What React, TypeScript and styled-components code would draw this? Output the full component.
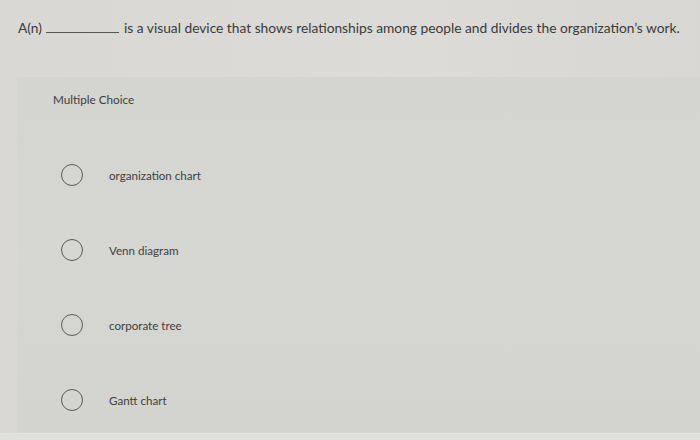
import React from 'react';
import styled, { createGlobalStyle } from 'styled-components';

const GlobalStyle = createGlobalStyle`
    html, body {
        margin: 0;
        padding: 0;
        background: #dad9d5;
    }
    body {
        font-family: 'Lato', 'Liberation Sans', sans-serif;
        color: #333333;
    }
`;

const options = ['organization chart', 'Venn diagram', 'corporate tree', 'Gantt chart'];

const App: React.FC = () => {
    return (
        <>
            <GlobalStyle />
            <Page>
                <Question>
                    A(n) <Blank /> is a visual device that shows relationships among people and divides the organization’s work.
                </Question>
                <Panel>
                    <Label>Multiple Choice</Label>
                    <OptionList>
                        {options.map((text) => (
                            <OptionRow key={text}>
                                <Radio />
                                <OptionText>{text}</OptionText>
                            </OptionRow>
                        ))}
                    </OptionList>
                </Panel>
                <Footer />
            </Page>
        </>
    );
};

export default App;

const Page = styled.div`
    width: 700px;
    height: 440px;
    display: flex;
    flex-direction: column;
    overflow: hidden;
    background: linear-gradient(90deg, #d9d8d4 0%, #dcdbd7 60%, #d8d7d4 100%);
`;

const Question = styled.div`
    padding: 19px 0 0 18px;
    height: 58px;
    box-sizing: border-box;
    font-size: 13.75px;
    color: #3a3a3a;
    white-space: nowrap;
`;

const Blank = styled.span`
    display: inline-block;
    width: 73px;
    height: 1px;
    margin: 0 2px 0 0;
    border-bottom: 1px solid #555555;
    vertical-align: baseline;
`;

const Panel = styled.div`
    margin-left: 17px;
    margin-top: 19px;
    height: 356px;
    padding: 15px 0 0 36px;
    box-sizing: border-box;
    background: linear-gradient(180deg, #d4d4d0 0%, #d6d6d2 50%, #d3d4d0 100%);
`;

const Label = styled.div`
    font-size: 11.7px;
    color: #3c3c3c;
    height: 20px;
`;

const OptionList = styled.div`
    display: flex;
    flex-direction: column;
    padding-top: 52px;
    gap: 53px;
`;

const OptionRow = styled.div`
    display: flex;
    align-items: center;
    height: 22px;
`;

const Radio = styled.span`
    width: 20px;
    height: 20px;
    border: 1.5px solid #5a5a5a;
    border-radius: 50%;
    margin-left: 8px;
    flex-shrink: 0;
`;

const OptionText = styled.span`
    margin-left: 26px;
    font-size: 11.6px;
    color: #404040;
`;

const Footer = styled.div`
    flex: 1;
    border-top: 1px solid #e4e4e2;
    background: #dfdfdc;
`;
